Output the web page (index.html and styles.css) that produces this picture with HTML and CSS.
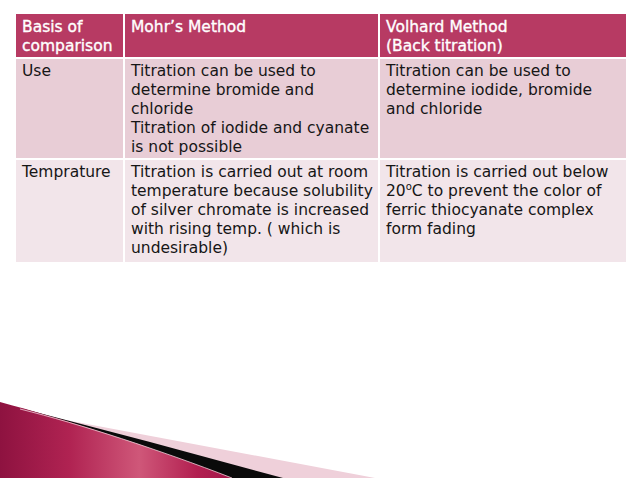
FILE: index.html
```html
<!DOCTYPE html>
<html>
<head>
<meta charset="utf-8">
<link rel="stylesheet" href="styles.css">
</head>
<body>
<div class="slide">
  <div class="table">
    <div class="cell head">Basis of<br>comparison</div>
    <div class="cell head">Mohr’s Method</div>
    <div class="cell head">Volhard Method<br>(Back titration)</div>

    <div class="cell r1">Use</div>
    <div class="cell r1">Titration can be used to<br>determine bromide and<br>chloride<br>Titration of iodide and cyanate<br>is not possible</div>
    <div class="cell r1">Titration can be used to<br>determine iodide, bromide<br>and chloride</div>

    <div class="cell r2">Temprature</div>
    <div class="cell r2">Titration is carried out at room<br>temperature because solubility<br>of silver chromate is increased<br>with rising temp. ( which is<br>undesirable)</div>
    <div class="cell r2">Titration is carried out below<br>20<sup class="deg">o</sup>C to prevent the color of<br>ferric thiocyanate complex<br>form fading</div>
  </div>

  <svg class="swoosh" width="638" height="90" viewBox="0 388 638 90" aria-hidden="true">
    <defs>
      <linearGradient id="crim" x1="0" y1="0" x2="1" y2="0" gradientUnits="objectBoundingBox">
        <stop offset="0" stop-color="#8e1240"/>
        <stop offset="0.3" stop-color="#b02352"/>
        <stop offset="0.6" stop-color="#cf5779"/>
        <stop offset="0.85" stop-color="#b21f50"/>
        <stop offset="1" stop-color="#a3174a"/>
      </linearGradient>
    </defs>
    <polygon points="55,418 375,478 240,478" fill="#efd0da"/>
    <polygon points="20,408 150,442 283,478 228,478" fill="#0a0a0a"/>
    <path d="M0,402 C60,418 150,446 232,478 L0,478 Z" fill="url(#crim)"/>
    <path d="M20,409 C80,424 160,450 232,478" fill="none" stroke="#f1cfd9" stroke-width="0.8"/>
  </svg>
</div>
</body>
</html>
```

FILE: styles.css
```css
html, body {
  margin: 0;
  padding: 0;
  background: #ffffff;
}

.slide {
  position: relative;
  width: 638px;
  height: 478px;
  overflow: hidden;
  background: #ffffff;
  font-family: "DejaVu Sans", "Liberation Sans", sans-serif;
  color: #161616;
}

.table {
  display: grid;
  grid-template-columns: 107px 253px 246px;
  grid-template-rows: 43px 99px 102px;
  gap: 2px;
  margin: 14px 0 0 16px;
  width: 610px;
}

.cell {
  padding: 3px 6px 0 6px;
  font-size: 15.5px;
  line-height: 19px;
  white-space: nowrap;
}

.head {
  padding-top: 4px;
  background: #b73a63;
  color: #ffffff;
  -webkit-text-stroke: 0.35px #ffffff;
}

.r1 {
  background: #e8cdd6;
}

.r2 {
  background: #f2e5ea;
}

.deg {
  font-size: 10px;
  vertical-align: 6px;
  line-height: 0;
}

.swoosh {
  position: absolute;
  left: 0;
  bottom: 0;
  display: block;
}
```
